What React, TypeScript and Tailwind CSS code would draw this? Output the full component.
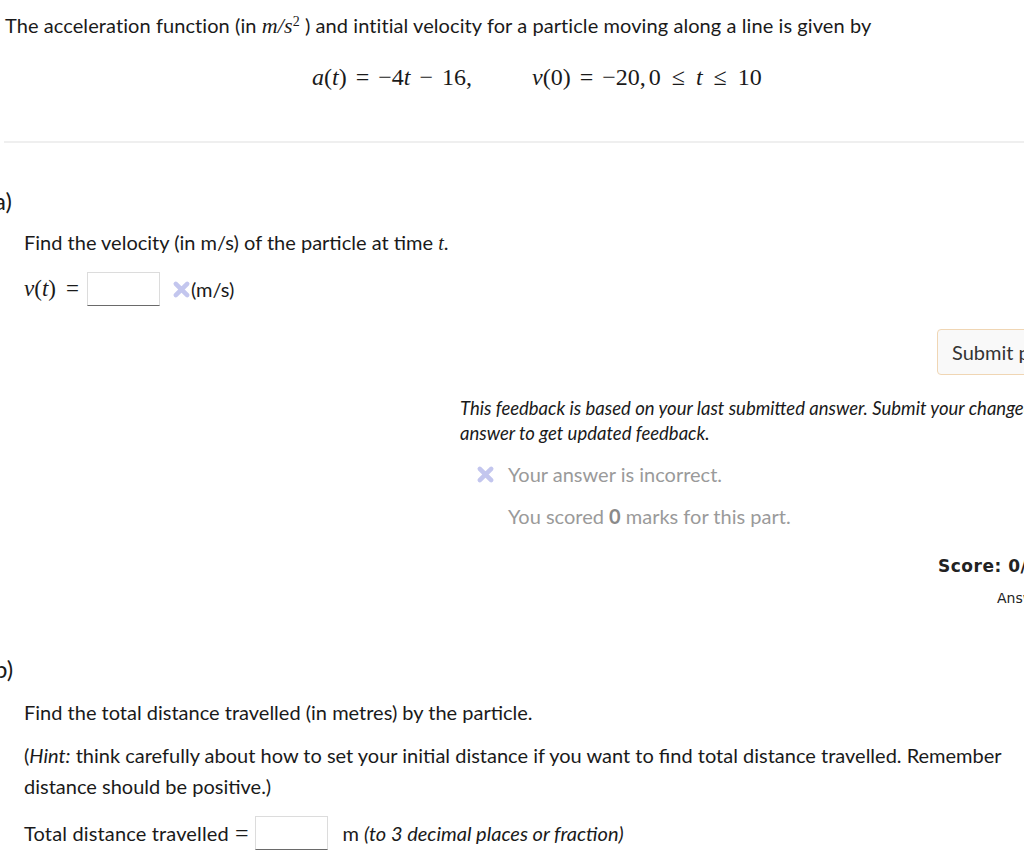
const sans = { fontFamily: 'Lato, "Open Sans", sans-serif' };

const Cross = ({ className }: { className?: string }) => (
  <svg className={className} viewBox="0 0 20 20" width="19" height="19">
    <path d="M4 4 L16 16 M16 4 L4 16" stroke="#c3c6ee" strokeWidth="4.8" strokeLinecap="round" />
  </svg>
);

const M = ({ children }: { children: React.ReactNode }) => (
  <span className="font-['Liberation_Serif',serif] italic">{children}</span>
);

const Op = ({ children }: { children: React.ReactNode }) => <span className="mx-[9px]">{children}</span>;

const Field = () => <div className="w-[73px] h-[34px] border border-[#dcdcdc] border-b-[#6a6a6a] bg-white" />;

export default function App() {
  return (
    <div className="w-[1024px] h-[856px] overflow-hidden bg-white text-[#1a1a1a]" style={sans}>
      <div className="w-[1110px] ml-[-6px]">
        <p className="pl-[11px] pt-[13px] text-[20px] leading-[24px] tracking-[0.08px]">
          The acceleration function (in <span className="font-['Liberation_Serif',serif] italic text-[22px]">m/s</span>
          <sup className="font-['Liberation_Serif',serif] text-[14px]">2</sup> ) and intitial velocity for a particle moving along a
          line is given by
        </p>
        <div className="mt-[25px] h-[28px] text-[24px] leading-[28px] font-['Liberation_Serif',serif]">
          <div className="pl-[318px] flex gap-[60px] whitespace-nowrap">
            <span>
              <M>a</M>(<M>t</M>)<Op>=</Op>−4<M>t</M>
              <Op>−</Op>16,
            </span>
            <span>
              <M>v</M>(0)<Op>=</Op>−20,<span className="ml-[3px]">0</span>
              <span className="mx-[11px]">≤</span>
              <M>t</M>
              <span className="mx-[11px]">≤</span>10
            </span>
          </div>
        </div>
        <div className="mt-[50px] ml-[10px] h-[2px] bg-[#efefef]" />

        {/* part a */}
        <div className="mt-[43px] text-[24px] leading-[30px]">a)</div>
        <div className="pl-[30px]">
          <p className="mt-[14px] text-[20px] leading-[24px]">
            Find the velocity (in m/s) of the particle at time <M>t</M>.
          </p>
          <div className="mt-[17px] flex items-center h-[34px]">
            <span className="font-['Liberation_Serif',serif] text-[23px] whitespace-nowrap">
              <M>v</M>(<M>t</M>)<span className="ml-[10px] mr-[8px]">=</span>
            </span>
            <Field />
            <Cross className="ml-[12px]" />
            <span className="text-[20px]">(m/s)</span>
          </div>
          <div className="mt-[23px] pl-[913px]">
            <button className="h-[46px] pl-[14px] pr-[16px] rounded-[4px] border border-[#f0d6b4] bg-[#f9f9f9] text-[20px] text-[#333] whitespace-nowrap">
              Submit part
            </button>
          </div>
          <div className="pl-[436px] mt-[21px]">
            <p className="italic text-[18.5px] leading-[25px] w-[590px]">
              This feedback is based on your last submitted answer. Submit your changed answer to get updated feedback.
            </p>
            <div className="pl-[16px] text-[20px] text-[#9a9a9a]">
              <div className="mt-[15px] flex items-center gap-[13px] h-[26px]">
                <Cross />
                <span>Your answer is incorrect.</span>
              </div>
              <div className="mt-[16px] ml-[32px] h-[26px] leading-[26px]">
                You scored <span className="font-bold text-[#8a8a8a]">0</span> marks for this part.
              </div>
            </div>
          </div>
          <div className="mt-[25px] pl-[914px] font-['DejaVu_Sans',sans-serif] whitespace-nowrap">
            <div className="h-[24px] leading-[24px] text-[17px] font-bold tracking-[0.5px] text-[#222]">Score: 0/1</div>
            <div className="mt-[10px] h-[20px] leading-[20px] pl-[59px] text-[14px] text-[#222]">Answered</div>
          </div>
        </div>

        {/* part b */}
        <div className="mt-[46px] text-[24px] leading-[30px]">b)</div>
        <div className="pl-[30px]">
          <p className="mt-[16px] text-[20px] leading-[24px]">Find the total distance travelled (in metres) by the particle.</p>
          <p className="mt-[15.5px] text-[20px] leading-[31px] w-[995px]">
            (<i>Hint:</i> think carefully about how to set your initial distance if you want to find total distance travelled. Remember
            distance should be positive.)
          </p>
          <div className="mt-[14px] flex items-center h-[34px] text-[20px] whitespace-nowrap">
            <span className="tracking-[0.15px]">Total distance travelled</span>
            <span className="ml-[6px] mr-[7px] font-['Liberation_Serif',serif] text-[24px]">=</span>
            <Field />
            <span className="ml-[14px]">
              m <i>(to 3 decimal places or fraction)</i>
            </span>
          </div>
        </div>
      </div>
    </div>
  );
}
